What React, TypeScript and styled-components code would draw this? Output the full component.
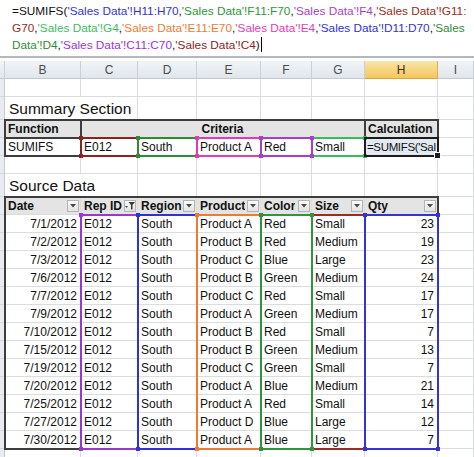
import React from 'react';
import styled, { createGlobalStyle } from 'styled-components';

const GlobalStyle = createGlobalStyle`
  html, body {
    margin: 0;
    padding: 0;
    overflow: hidden;
    background: #fff;
    font-family: "Liberation Sans", Arial, sans-serif;
    color: #111;
  }
`;

const C = {
  blue: '#3434d6',
  green: '#2e963c',
  purple: '#a63fcb',
  maroon: '#9a2c26',
  lime: '#3dbb5c',
  orange: '#f07a34',
  pink: '#df3db6',
  blue2: '#3030dc',
  green2: '#2f8c35',
  purple2: '#9a36d2',
  maroon2: '#8c2323',
};

const Page = styled.div`
  width: 474px;
  height: 457px;
  overflow: hidden;
`;

const FormulaBar = styled.div`
  height: 53px;
  padding: 3px 0 0 12px;
  border-bottom: 2px solid #b3b8bf;
  margin-bottom: 3px;
  font-size: 11.8px;
  line-height: 17px;
`;

const FormulaLine = styled.div`
  white-space: nowrap;
`;

const Ref = styled.span<{ $color: string }>`
  color: ${p => p.$color};
`;

const Caret = styled.span`
  display: inline-block;
  width: 0;
  height: 15px;
  border-left: 1px solid #000;
  margin-left: 1px;
  vertical-align: -3px;
`;

const Sheet = styled.div`
  display: grid;
  grid-template-columns: 5px 76px 57px 59px 64px 51px 53px 73px 1fr;
  grid-template-rows: 18px 18px 23px 18px 18px 18px 23px 18px repeat(14, 18px);
  font-size: 12px;
`;

const ColHead = styled.div<{ $col: number; $active?: boolean }>`
  grid-column: ${p => p.$col};
  grid-row: 1;
  display: flex;
  align-items: center;
  justify-content: center;
  color: ${p => (p.$active ? '#3a3020' : '#4c4c4c')};
  background: ${p =>
    p.$active
      ? 'linear-gradient(#fbe4a6, #f3c75e)'
      : 'linear-gradient(#f1f4f7, #e1e6ec)'};
  border-right: 1px solid ${p => (p.$active ? '#e2b04a' : '#c9cfd7')};
  border-bottom: 1px solid ${p => (p.$active ? '#dca43a' : '#c2c9d2')};
`;

const RowHead = styled.div<{ $row: number }>`
  grid-column: 1;
  grid-row: ${p => p.$row};
  background: #e8ecf1;
  border-right: 1px solid #c2c9d2;
  border-bottom: 1px solid #d3d8de;
`;

const Cell = styled.div<{
  $col: number;
  $row: number;
  $span: number;
  $align: string;
  $bold?: boolean;
  $fill: string;
  $big?: boolean;
  $tight?: boolean;
}>`
  grid-column: ${p => p.$col} / span ${p => p.$span};
  grid-row: ${p => p.$row};
  display: flex;
  align-items: ${p => (p.$big ? 'flex-end' : 'center')};
  justify-content: ${p => p.$align};
  padding: ${p => (p.$big ? '0 3px 1px 4px' : p.$tight ? '0 0 0 2px' : '0 3px')};
  min-width: 0;
  overflow: hidden;
  white-space: nowrap;
  background: ${p => p.$fill};
  border-right: 1px solid #dadcdd;
  border-bottom: 1px solid #dadcdd;
  font-size: ${p => (p.$big ? '15.5px' : p.$tight ? '11.5px' : '12px')};
  letter-spacing: ${p => (p.$tight ? '-0.35px' : 'normal')};
  font-weight: ${p => (p.$bold ? 700 : 400)};
  color: #111;
`;

const Label = styled.span`
  overflow: hidden;
`;

const DropButton = styled.span`
  flex: none;
  width: 12px;
  height: 12px;
  margin: 0 -2px 0 auto;
  box-sizing: border-box;
  border: 1px solid #b4b4b4;
  background: linear-gradient(#fdfdfd, #e2e2e2);
  display: flex;
  align-items: center;
  justify-content: center;
`;

const Frame = styled.div<{ $c1: number; $c2: number; $r1: number; $r2: number }>`
  grid-column: ${p => p.$c1} / ${p => p.$c2 + 1};
  grid-row: ${p => p.$r1} / ${p => p.$r2 + 1};
  margin: -1px;
  border: 2px solid #3d3d3d;
  pointer-events: none;
  z-index: 2;
`;

const Range = styled(Frame)<{ $color: string }>`
  position: relative;
  border-color: ${p => p.$color};
  z-index: 3;
`;

const Active = styled(Frame)`
  position: relative;
  border-color: #1c1c1c;
  z-index: 4;
`;

const Handle = styled.span<{ $color: string; $v: 'top' | 'bottom'; $h: 'left' | 'right' }>`
  position: absolute;
  width: 4px;
  height: 4px;
  background: ${p => p.$color};
  ${p => p.$v}: -3px;
  ${p => p.$h}: -3px;
`;

const FillHandle = styled.span`
  position: absolute;
  right: -4px;
  bottom: -4px;
  width: 5px;
  height: 5px;
  background: #1c1c1c;
  border: 1px solid #fff;
`;

type Spec = {
  col: number;
  span?: number;
  text?: string;
  align?: 'left' | 'right' | 'center';
  bold?: boolean;
  fill?: string;
  big?: boolean;
  tight?: boolean;
  drop?: 'plain' | 'filter';
};

const justify = { left: 'flex-start', right: 'flex-end', center: 'center' };

const Arrow = () => (
  <svg width="6" height="4" viewBox="0 0 6 4">
    <polygon points="0,0 6,0 3,3.5" fill="#4a4a4a" />
  </svg>
);

const FilterIcon = () => (
  <svg width="10" height="9" viewBox="0 0 10 9">
    <polygon points="0,5 3,5 1.5,7" fill="#4a4a4a" />
    <path d="M3.5 1 H10 L7.5 4 V8.5 H6 V4 Z" fill="#3a3a3a" />
  </svg>
);

function buildRow(row: number, specs: Spec[]) {
  const out: React.ReactNode[] = [<RowHead key={`rh${row}`} $row={row} />];
  let col = 2;
  while (col <= 9) {
    const s = specs.find(x => x.col === col) || { col };
    const span = s.span || 1;
    out.push(
      <Cell
        key={`${row}-${col}`}
        $row={row}
        $col={col}
        $span={span}
        $align={justify[s.align || 'left']}
        $bold={s.bold}
        $fill={s.fill || '#fff'}
        $big={s.big}
        $tight={s.tight}
      >
        {s.text && <Label>{s.text}</Label>}
        {s.drop && <DropButton>{s.drop === 'filter' ? <FilterIcon /> : <Arrow />}</DropButton>}
      </Cell>
    );
    col += span;
  }
  return out;
}

const data: [string, string, string, string, string, number][] = [
  ['7/1/2012', 'South', 'Product A', 'Red', 'Small', 23],
  ['7/2/2012', 'South', 'Product B', 'Red', 'Medium', 19],
  ['7/3/2012', 'South', 'Product C', 'Blue', 'Large', 23],
  ['7/6/2012', 'South', 'Product B', 'Green', 'Medium', 24],
  ['7/7/2012', 'South', 'Product C', 'Red', 'Small', 17],
  ['7/9/2012', 'South', 'Product A', 'Green', 'Medium', 17],
  ['7/10/2012', 'South', 'Product B', 'Red', 'Small', 7],
  ['7/15/2012', 'South', 'Product B', 'Green', 'Medium', 13],
  ['7/19/2012', 'South', 'Product C', 'Green', 'Small', 7],
  ['7/20/2012', 'South', 'Product A', 'Blue', 'Medium', 21],
  ['7/25/2012', 'South', 'Product A', 'Red', 'Small', 14],
  ['7/27/2012', 'South', 'Product D', 'Blue', 'Large', 12],
  ['7/30/2012', 'South', 'Product A', 'Blue', 'Large', 7],
];

const HEAD = '#e4e4e4';

const RangeBox = ({ c1, c2, r1, r2, color }: { c1: number; c2: number; r1: number; r2: number; color: string }) => (
  <Range $c1={c1} $c2={c2} $r1={r1} $r2={r2} $color={color}>
    <Handle $color={color} $v="top" $h="left" />
    <Handle $color={color} $v="top" $h="right" />
    <Handle $color={color} $v="bottom" $h="left" />
    <Handle $color={color} $v="bottom" $h="right" />
  </Range>
);

const App = () => {
  const rows: React.ReactNode[] = [];
  rows.push(...buildRow(2, []));
  rows.push(...buildRow(3, [{ col: 2, span: 2, text: 'Summary Section', big: true }]));
  rows.push(
    ...buildRow(4, [
      { col: 2, text: 'Function', bold: true, fill: HEAD },
      { col: 3, span: 5, text: 'Criteria', bold: true, fill: HEAD, align: 'center' },
      { col: 8, text: 'Calculation', bold: true, fill: HEAD },
    ])
  );
  rows.push(
    ...buildRow(5, [
      { col: 2, text: 'SUMIFS' },
      { col: 3, text: 'E012' },
      { col: 4, text: 'South' },
      { col: 5, text: 'Product A' },
      { col: 6, text: 'Red' },
      { col: 7, text: 'Small' },
      { col: 8, text: "=SUMIFS('Sal", fill: '#e3e9f1', tight: true },
    ])
  );
  rows.push(...buildRow(6, []));
  rows.push(...buildRow(7, [{ col: 2, span: 2, text: 'Source Data', big: true }]));
  rows.push(
    ...buildRow(
      8,
      ['Date', 'Rep ID', 'Region', 'Product', 'Color', 'Size', 'Qty'].map((t, i) => ({
        col: i + 2,
        text: t,
        bold: true,
        fill: HEAD,
        drop: (i === 1 ? 'filter' : 'plain') as 'filter' | 'plain',
      }))
    )
  );
  data.forEach((d, i) => {
    rows.push(
      ...buildRow(9 + i, [
        { col: 2, text: d[0], align: 'right' },
        { col: 3, text: 'E012' },
        { col: 4, text: d[1] },
        { col: 5, text: d[2] },
        { col: 6, text: d[3] },
        { col: 7, text: d[4] },
        { col: 8, text: String(d[5]), align: 'right' },
      ])
    );
  });
  rows.push(...buildRow(22, []));

  const letters = ['B', 'C', 'D', 'E', 'F', 'G', 'H', 'I'];

  return (
    <Page>
      <GlobalStyle />
      <FormulaBar>
        <FormulaLine>
          =SUMIFS(<Ref $color={C.blue}>'Sales Data'!H11:H70</Ref>,
          <Ref $color={C.green}>'Sales Data'!F11:F70</Ref>,
          <Ref $color={C.purple}>'Sales Data'!F4</Ref>,
          <Ref $color={C.maroon}>'Sales Data'!G11:</Ref>
        </FormulaLine>
        <FormulaLine>
          <Ref $color={C.maroon}>G70</Ref>,<Ref $color={C.lime}>'Sales Data'!G4</Ref>,
          <Ref $color={C.orange}>'Sales Data'!E11:E70</Ref>,
          <Ref $color={C.pink}>'Sales Data'!E4</Ref>,
          <Ref $color={C.blue2}>'Sales Data'!D11:D70</Ref>,
          <Ref $color={C.green2}>'Sales</Ref>
        </FormulaLine>
        <FormulaLine>
          <Ref $color={C.green2}>Data'!D4</Ref>,<Ref $color={C.purple2}>'Sales Data'!C11:C70</Ref>,
          <Ref $color={C.maroon2}>'Sales Data'!C4</Ref>)<Caret />
        </FormulaLine>
      </FormulaBar>
      <Sheet>
        <ColHead $col={1} />
        {letters.map((l, i) => (
          <ColHead key={l} $col={i + 2} $active={l === 'H'}>
            {l}
          </ColHead>
        ))}
        {rows}

        <Frame $c1={2} $c2={2} $r1={4} $r2={5} />
        <Frame $c1={3} $c2={7} $r1={4} $r2={4} />
        <Frame $c1={8} $c2={8} $r1={4} $r2={5} />
        <Frame $c1={2} $c2={8} $r1={5} $r2={5} />
        <Frame $c1={2} $c2={8} $r1={8} $r2={21} />

        <RangeBox c1={3} c2={3} r1={5} r2={5} color={C.maroon2} />
        <RangeBox c1={4} c2={4} r1={5} r2={5} color={C.green2} />
        <RangeBox c1={5} c2={5} r1={5} r2={5} color={C.pink} />
        <RangeBox c1={7} c2={7} r1={5} r2={5} color={C.lime} />
        <RangeBox c1={6} c2={6} r1={5} r2={5} color={C.purple} />

        <RangeBox c1={3} c2={3} r1={9} r2={21} color={C.purple2} />
        <RangeBox c1={4} c2={4} r1={9} r2={21} color={C.blue2} />
        <RangeBox c1={5} c2={5} r1={9} r2={21} color={C.orange} />
        <RangeBox c1={7} c2={7} r1={9} r2={21} color={C.maroon} />
        <RangeBox c1={6} c2={6} r1={9} r2={21} color={C.green} />
        <RangeBox c1={8} c2={8} r1={9} r2={21} color={C.blue} />

        <Active $c1={8} $c2={8} $r1={5} $r2={5}>
          <FillHandle />
        </Active>
      </Sheet>
    </Page>
  );
};

export default App;
